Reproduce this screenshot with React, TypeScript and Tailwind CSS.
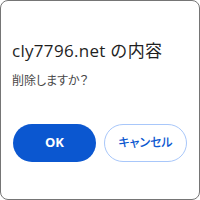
export default function App() {
  return (
    <div className="w-[200px] h-[200px] bg-white">
      <div
        className="w-full h-full border border-[#757575] rounded-[8px] bg-white pl-[11px] pr-3 flex flex-col"
        style={{ fontFamily: '"Open Sans", "Noto Sans CJK JP", sans-serif' }}
      >
        <h1 className="mt-[40px] text-[17px] leading-[20px] text-[#1f1f1f] tracking-[0.3px]">cly7796.net の内容</h1>
        <p className="mt-[11px] text-[12px] leading-[18px] text-[#474747] [font-feature-settings:'palt']">削除しますか？</p>
        <div className="mt-[34px] flex gap-2 pl-[1px]">
          <button className="w-[84px] h-[38px] rounded-full bg-[#0b57d0] text-white text-[13px] font-bold">OK</button>
          <button className="w-[84px] h-[38px] rounded-full border border-[#a8c7fa] text-[#0b57d0] text-[12px] font-medium [font-feature-settings:'palt']">
            キャンセル
          </button>
        </div>
      </div>
    </div>
  );
}
